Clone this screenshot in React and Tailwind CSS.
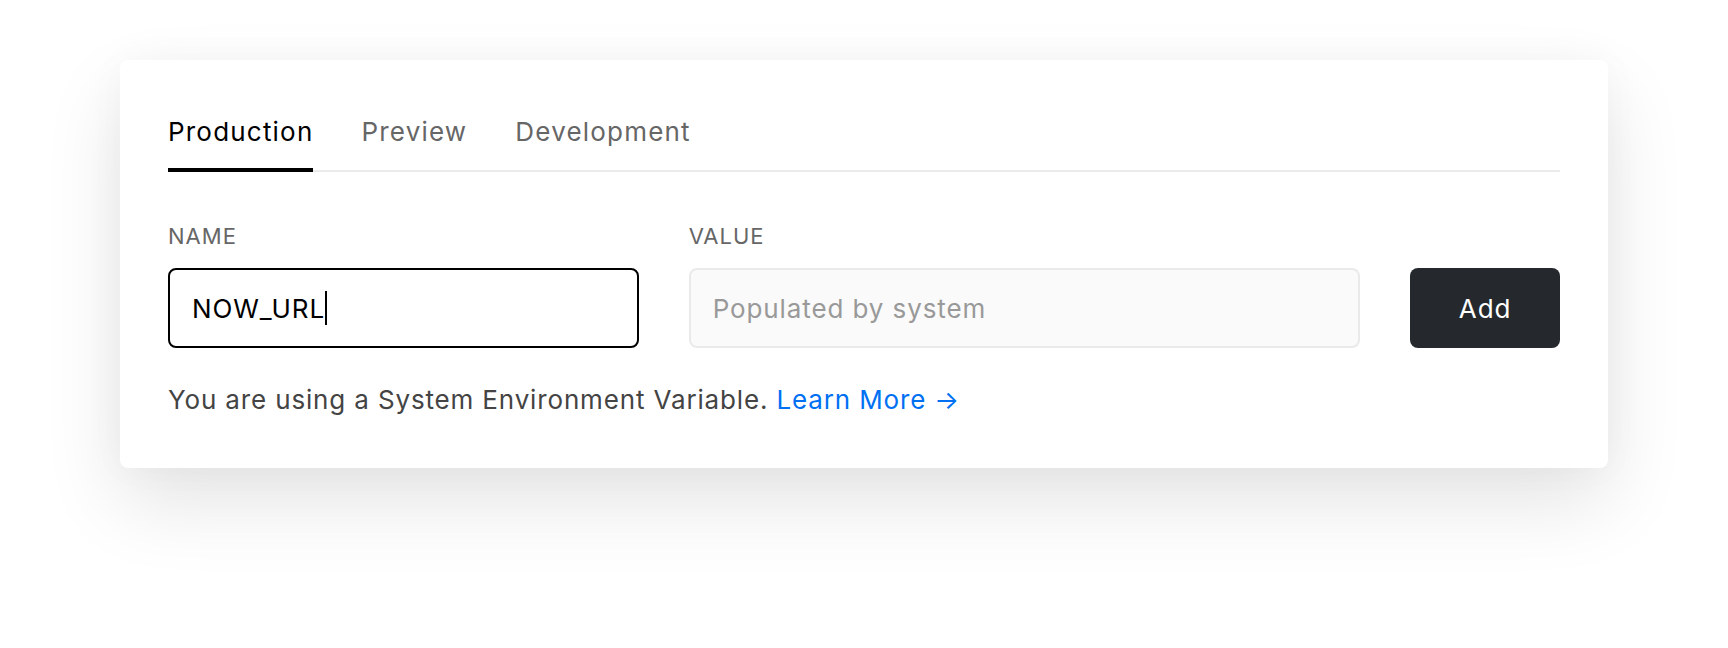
export default function App() {
  const font = { fontFamily: 'Inter, "Noto Sans", sans-serif' };
  return (
    <div className="w-[1728px] h-[648px] bg-white overflow-hidden" style={font}>
      <div className="ml-[120px] mt-[60px] w-[1488px] h-[408px] bg-white rounded-[8px] shadow-[0_34px_80px_rgba(0,0,0,0.11),0_0_40px_rgba(0,0,0,0.03)] px-12 pt-[56px]">
        <div className="flex gap-[48px] border-b-2 border-[#eaeaea] tracking-[1.2px]">
          <div className="text-[26px] leading-[32px] text-black pb-[20px] border-b-4 border-black -mb-[2px]">Production</div>
          <div className="text-[26px] leading-[32px] text-[#666] pb-[20px] border-b-4 border-transparent -mb-[2px]">Preview</div>
          <div className="text-[26px] leading-[32px] text-[#666] pb-[20px] border-b-4 border-transparent -mb-[2px]">Development</div>
        </div>
        <div className="flex gap-[50px] mt-[50px]">
          <div className="w-[471px] flex flex-col">
            <div className="text-[22px] leading-[28px] text-[#666] uppercase tracking-[1px]">Name</div>
            <div className="mt-[18px] h-[80px] rounded-[8px] border-2 border-black flex items-center pl-[22px] text-[26px] text-black tracking-[0.9px]">
              <span>NOW_URL</span>
              <span className="inline-block w-[2px] h-[34px] bg-black"></span>
            </div>
          </div>
          <div className="w-[672px] flex flex-col">
            <div className="text-[22px] leading-[28px] text-[#666] uppercase tracking-[1px]">Value</div>
            <div className="mt-[18px] h-[80px] rounded-[8px] border-2 border-[#eaeaea] bg-[#fafafa] flex items-center pl-[22px] text-[26px] text-[#999] tracking-[0.9px]">
              Populated by system
            </div>
          </div>
          <div className="w-[150px] flex flex-col justify-end">
            <button className="h-[80px] w-full rounded-[8px] bg-[#25292d] text-white text-[26px] tracking-[0.9px]">Add</button>
          </div>
        </div>
        <div className="mt-[36px] text-[26px] leading-[32px] text-[#444] tracking-[0.85px]">
          You are using a System Environment Variable.{' '}
          <span className="text-[#0070f3]">Learn More →</span>
        </div>
      </div>
    </div>
  );
}
